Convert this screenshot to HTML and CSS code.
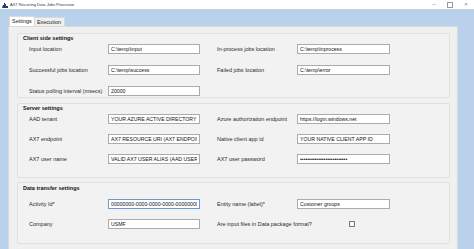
FILE: index.html
```html
<!DOCTYPE html>
<html lang="en">
<head>
  <meta charset="UTF-8" />
  <title>AX7 Recurring Data Jobs Processor</title>
  <link rel="stylesheet" href="styles.css">
</head>
<body>
  <div class="window">
    <div class="titlebar">
      <svg class="app-icon" width="6" height="6" viewBox="0 0 6 6">
        <path d="M0 6 L1 3 L2 3 L2 1 L3 1 L3 2 L4 2 L4 4 L6 4 L6 6 Z" fill="#1f3f7a"/>
      </svg>
      <span class="title">AX7 Recurring Data Jobs Processor</span>
      <div class="controls">
        <span class="ctl">&#8211;</span>
        <span class="ctl max"></span>
        <span class="ctl">&#215;</span>
      </div>
    </div>

    <div class="client">
      <div class="tabs">
        <span class="tab active">Settings</span>
        <span class="tab">Execution</span>
      </div>

      <div class="panel">
        <section class="group client-side">
          <h3>Client side settings</h3>
          <div class="form-grid">
            <label>Input location</label>
            <input type="text" value="C:\temp\input" readonly>
            <label class="right">In-process jobs location</label>
            <input type="text" value="C:\temp\inprocess" readonly>

            <label>Successful jobs location</label>
            <input type="text" value="C:\temp\success" readonly>
            <label class="right">Failed jobs location</label>
            <input type="text" value="C:\temp\error" readonly>

            <label>Status polling interval (msecs)</label>
            <input type="text" value="20000" readonly>
          </div>
        </section>

        <section class="group server">
          <h3>Server settings</h3>
          <div class="form-grid">
            <label>AAD tenant</label>
            <input type="text" value="YOUR AZURE ACTIVE DIRECTORY TENANT" readonly>
            <label class="right">Azure authorization endpoint</label>
            <input type="text" value="https://login.windows.net" readonly>

            <label>AX7 endpoint</label>
            <input type="text" value="AX7 RESOURCE URI (AX7 ENDPOINT)" readonly>
            <label class="right">Native client app id</label>
            <input type="text" value="YOUR NATIVE CLIENT APP ID" readonly>

            <label>AX7 user name</label>
            <input type="text" value="VALID AX7 USER ALIAS (AAD USER NAME)" readonly>
            <label class="right">AX7 user password</label>
            <input type="password" value="xxxxxxxxxxxxxxxxxxxxxxxxxx" readonly>
          </div>
        </section>

        <section class="group transfer">
          <h3>Data transfer settings</h3>
          <div class="form-grid">
            <label>Activity Id*</label>
            <input type="text" class="focused" value="00000000-0000-0000-0000-000000000000" readonly>
            <label class="right">Entity name (label)*</label>
            <input type="text" value="Customer groups" readonly>

            <label>Company</label>
            <input type="text" value="USMF" readonly>
            <label class="right">Are input files in Data package format?</label>
            <span class="check-cell"><span class="checkbox"></span></span>
          </div>
        </section>
      </div>
    </div>
  </div>
</body>
</html>
```

FILE: styles.css
```css
* { box-sizing: border-box; margin: 0; padding: 0; }
body { font-family: 'Liberation Sans', Arial, sans-serif; font-size: 5.5px; color: #1a1a1a; background: #b9d1ea; }

.window { width: 474px; height: 249px; background: #b9d1ea; overflow: hidden; }

.titlebar { height: 9px; background: #ffffff; display: flex; align-items: center; padding-left: 2px; }
.app-icon { display: block; }
.title { font-size: 4px; color: #333; margin-left: 2px; }
.controls { margin-left: auto; display: flex; align-items: center; height: 9px; }
.ctl { width: 16px; text-align: center; font-size: 6px; color: #888; line-height: 9px; }
.ctl.max { display: flex; align-items: center; justify-content: center; }
.ctl.max::after { content: ""; width: 4px; height: 4px; border: 1px solid #999; }

.client { padding: 8px 16px 0 8px; }

.tabs { display: flex; align-items: flex-end; height: 9px; padding-left: 1px; }
.tab {
  font-size: 5.5px; line-height: 8px; padding: 0 3px 0 2px; background: #f0f0f0;
  border: 1px solid #d9d9d9; border-bottom: none; color: #222;
}
.tab.active { background: #ffffff; line-height: 9px; padding: 0 2px; }
.tab + .tab { border-left: none; }

.panel {
  background: #f0f0f0; border: 1px solid #d9d9d9; border-bottom: none;
  height: 223px; padding: 6px 7px 0 8px;
}

.group { border: 1px solid #e0e0e0; border-radius: 2px; padding-left: 11px; background: #f2f2f2; }
.group h3 { font-size: 5.5px; font-weight: bold; line-height: 7px; margin-left: -6px; color: #111; }

.client-side { padding-top: 1px; padding-bottom: 1px; }
.client-side .form-grid { margin-top: 2px; row-gap: 11px; }

.server { margin-top: 5px; padding-top: 1px; padding-bottom: 13px; }
.server .form-grid { margin-top: 2px; }

.transfer { margin-top: 4px; padding-top: 2px; padding-bottom: 14px; }
.transfer .form-grid { margin-top: 7px; }

.form-grid {
  display: grid; grid-template-columns: 79px 92px 97px 93px;
  grid-auto-rows: 10px; row-gap: 10px; align-items: center;
}
.form-grid label { white-space: nowrap; color: #2a2a2a; }
.form-grid label.right { padding-left: 17px; }

.form-grid input {
  height: 10px; width: 100%; border: 1px solid #ababab; background: #ffffff;
  font-family: 'Liberation Sans', Arial, sans-serif; font-size: 5.2px; color: #111;
  padding: 0 2px; outline: none;
}
.form-grid input.focused { border-color: #6a9ad0; }

.check-cell { display: flex; align-items: center; padding-left: 52px; }
.checkbox { width: 6px; height: 6px; border: 1px solid #777; background: #fff; }
```
